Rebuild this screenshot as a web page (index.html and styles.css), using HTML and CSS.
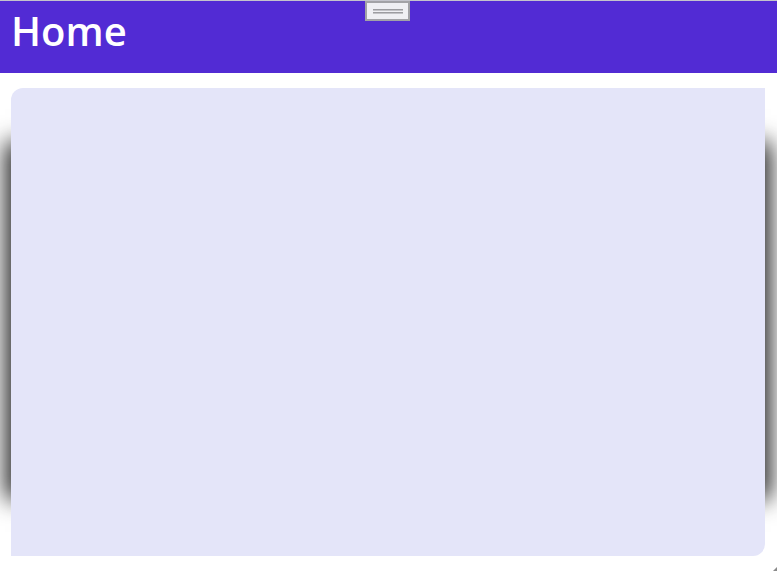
FILE: index.html
```html
<!DOCTYPE html>
<html>
<head>
<meta charset="utf-8">
<link rel="stylesheet" href="styles.css">
</head>
<body>
<div class="app">
  <header class="topbar">
    <h1 class="title">Home</h1>
    <div class="handle"><span class="line"></span><span class="line"></span></div>
  </header>
  <main class="content">
    <div class="backdrop-panel"></div>
    <section class="card"></section>
  </main>
  <div class="grip"></div>
</div>
</body>
</html>
```
FILE: styles.css
```css
html, body {
  margin: 0;
  padding: 0;
  height: 100%;
  overflow: hidden;
  background: #ffffff;
}
.app {
  position: relative;
  width: 777px;
  height: 571px;
  display: flex;
  flex-direction: column;
  font-family: "Open Sans", "Noto Sans", sans-serif;
}
.topbar {
  position: relative;
  height: 72px;
  background: #522bd4;
  border-top: 1px solid #c4c4cc;
  display: flex;
  align-items: flex-start;
  flex-shrink: 0;
}
.title {
  margin: 0;
  padding: 4px 0 0 11px;
  color: #ffffff;
  font-size: 40px;
  font-weight: 600;
  line-height: 52px;
}
.handle {
  position: absolute;
  left: 365px;
  top: 0;
  width: 41px;
  height: 16px;
  background: #efeff3;
  border: 2px solid #a2a2a6;
  display: flex;
  flex-direction: column;
  justify-content: center;
  align-items: center;
  gap: 1px;
}
.line {
  display: block;
  width: 30px;
  height: 2px;
  background: linear-gradient(#9c9ca0 50%, #c2c2c6 50%);
}
.content {
  position: relative;
  flex: 1;
  padding: 15px 12px 15px 11px;
}
.backdrop-panel {
  position: absolute;
  left: 11px;
  right: 12px;
  top: 75px;
  height: 345px;
  box-shadow: 0 0 22px 6px rgba(0, 0, 0, 0.85);
  background: #333;
}
.card {
  position: relative;
  height: 100%;
  background: #e4e5f9;
  border-radius: 12px 0 12px 0;
}
.grip {
  position: absolute;
  right: 0;
  bottom: 0;
  width: 0;
  height: 0;
  border-left: 4px solid transparent;
  border-bottom: 4px solid #8a8a8a;
}
```
